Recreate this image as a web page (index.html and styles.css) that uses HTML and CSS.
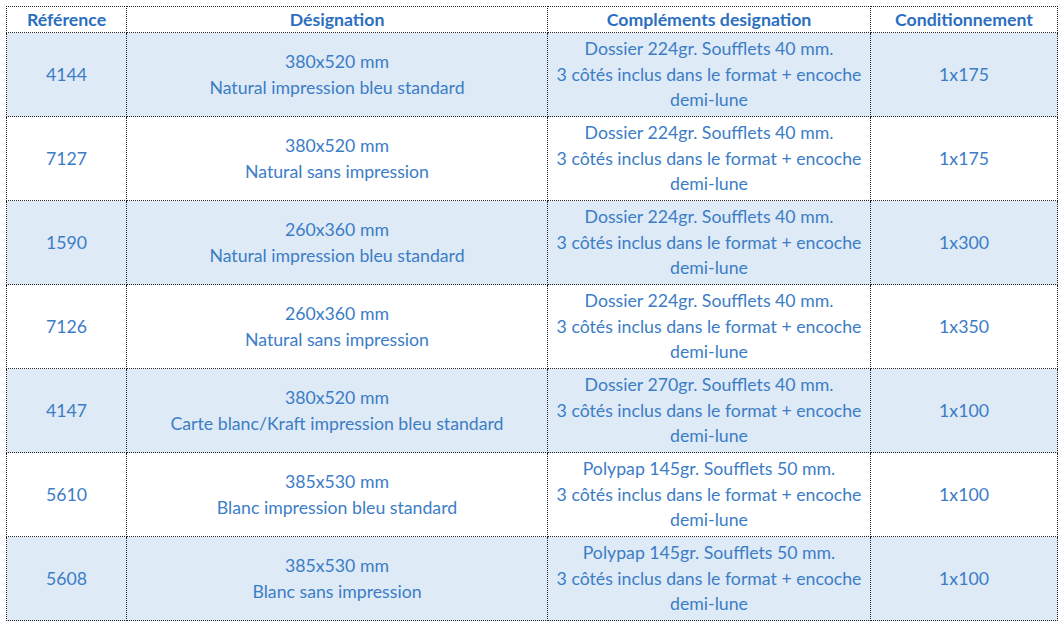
FILE: index.html
```html
<!DOCTYPE html>
<html lang="fr">
<head>
<meta charset="utf-8">
<title>Tableau</title>
<link rel="stylesheet" href="styles.css">
</head>
<body>
<table class="grid">
  <colgroup>
    <col class="c-ref"><col class="c-des"><col class="c-comp"><col class="c-cond">
  </colgroup>
  <thead>
    <tr class="head"><th>Référence</th><th>Désignation</th><th>Compléments designation</th><th>Conditionnement</th></tr>
  </thead>
  <tbody>
    <tr class="alt"><td>4144</td><td>380x520 mm<br>Natural impression bleu standard</td><td>Dossier 224gr. Soufflets 40 mm.<br>3 côtés inclus dans le format + encoche<br>demi-lune</td><td>1x175</td></tr>
    <tr><td>7127</td><td>380x520 mm<br>Natural sans impression</td><td>Dossier 224gr. Soufflets 40 mm.<br>3 côtés inclus dans le format + encoche<br>demi-lune</td><td>1x175</td></tr>
    <tr class="alt"><td>1590</td><td>260x360 mm<br>Natural impression bleu standard</td><td>Dossier 224gr. Soufflets 40 mm.<br>3 côtés inclus dans le format + encoche<br>demi-lune</td><td>1x300</td></tr>
    <tr><td>7126</td><td>260x360 mm<br>Natural sans impression</td><td>Dossier 224gr. Soufflets 40 mm.<br>3 côtés inclus dans le format + encoche<br>demi-lune</td><td>1x350</td></tr>
    <tr class="alt"><td>4147</td><td>380x520 mm<br>Carte blanc/Kraft impression bleu standard</td><td>Dossier 270gr. Soufflets 40 mm.<br>3 côtés inclus dans le format + encoche<br>demi-lune</td><td>1x100</td></tr>
    <tr><td>5610</td><td>385x530 mm<br>Blanc impression bleu standard</td><td>Polypap 145gr. Soufflets 50 mm.<br>3 côtés inclus dans le format + encoche<br>demi-lune</td><td>1x100</td></tr>
    <tr class="alt"><td>5608</td><td>385x530 mm<br>Blanc sans impression</td><td>Polypap 145gr. Soufflets 50 mm.<br>3 côtés inclus dans le format + encoche<br>demi-lune</td><td>1x100</td></tr>
  </tbody>
</table>
</body>
</html>
```
FILE: styles.css
```css
html, body { margin: 0; padding: 0; background: #ffffff; }
body { padding: 6px 0 0 6px; }
.grid {
  border-collapse: collapse;
  table-layout: fixed;
  width: 1051px;
  font-family: Lato, "Open Sans", sans-serif;
  font-size: 17.7px;
  color: #3c7dc6;
}
.c-ref { width: 120px; }
.c-des { width: 421px; }
.c-comp { width: 323px; }
.c-cond { width: 187px; }
.grid th, .grid td {
  border: 1px dotted #222;
  text-align: center;
  vertical-align: middle;
  padding: 0;
}
.grid th {
  height: 25px;
  line-height: 25px;
  font-weight: bold;
  color: #2b6fbf;
}
.grid td {
  height: 83px;
  line-height: 25.5px;
}
.grid tr.alt td { background: #deeaf6; }
```
